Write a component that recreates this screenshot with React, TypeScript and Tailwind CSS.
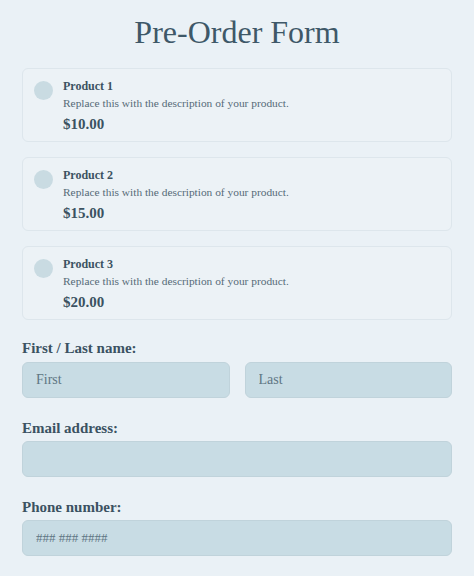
const products = [
  { name: "Product 1", price: "$10.00" },
  { name: "Product 2", price: "$15.00" },
  { name: "Product 3", price: "$20.00" },
];

const serif = { fontFamily: '"Liberation Serif", "DejaVu Serif", serif' };

export default function App() {
  return (
    <div className="min-h-[576px] w-[474px] bg-[#eaf1f6] px-[22px] pt-[14px] pb-5 text-[#3b5262]" style={serif}>
      <h1 className="text-center text-[32px] leading-9 text-[#3e5868]">Pre-Order Form</h1>

      <div className="mt-[18px] flex flex-col gap-[15px]">
        {products.map((p) => (
          <label
            key={p.name}
            className="flex h-[74px] gap-[10px] rounded-md border border-[#dde6ec] bg-[#ecf2f6] pl-[11px] pt-[9px]"
          >
            <span className="mt-[3px] h-[19px] w-[19px] shrink-0 rounded-full bg-[#c9dbe2]" />
            <span className="flex flex-col">
              <span className="text-[12px] font-bold leading-4">{p.name}</span>
              <span className="mt-[1px] text-[11.4px] leading-4 text-[#566b78]">
                Replace this with the description of your product.
              </span>
              <span className="mt-[3px] text-[15px] font-bold leading-5">{p.price}</span>
            </span>
          </label>
        ))}
      </div>

      <div className="mt-[18px] text-[15px] font-bold leading-5">First / Last name:</div>
      <div className="mt-[4px] flex gap-[15px]">
        <input
          placeholder="First"
          className="h-[36px] w-full rounded-md border border-[#c0d3db] bg-[#c8dce4] px-[13px] text-[14px] placeholder:text-[#5f7683]"
        />
        <input
          placeholder="Last"
          className="h-[36px] w-full rounded-md border border-[#c0d3db] bg-[#c8dce4] px-[13px] text-[14px] placeholder:text-[#5f7683]"
        />
      </div>

      <div className="mt-[20px] text-[15px] font-bold leading-5">Email address:</div>
      <input className="mt-[3px] block h-[36px] w-full rounded-md border border-[#c0d3db] bg-[#c8dce4] px-[13px] text-[14px]" />

      <div className="mt-[20px] text-[15px] font-bold leading-5">Phone number:</div>
      <input
        placeholder="### ### ####"
        className="mt-[3px] block h-[36px] w-full rounded-md border border-[#c0d3db] bg-[#c8dce4] px-[13px] text-[13px] placeholder:text-[#5f7683]"
      />
    </div>
  );
}
